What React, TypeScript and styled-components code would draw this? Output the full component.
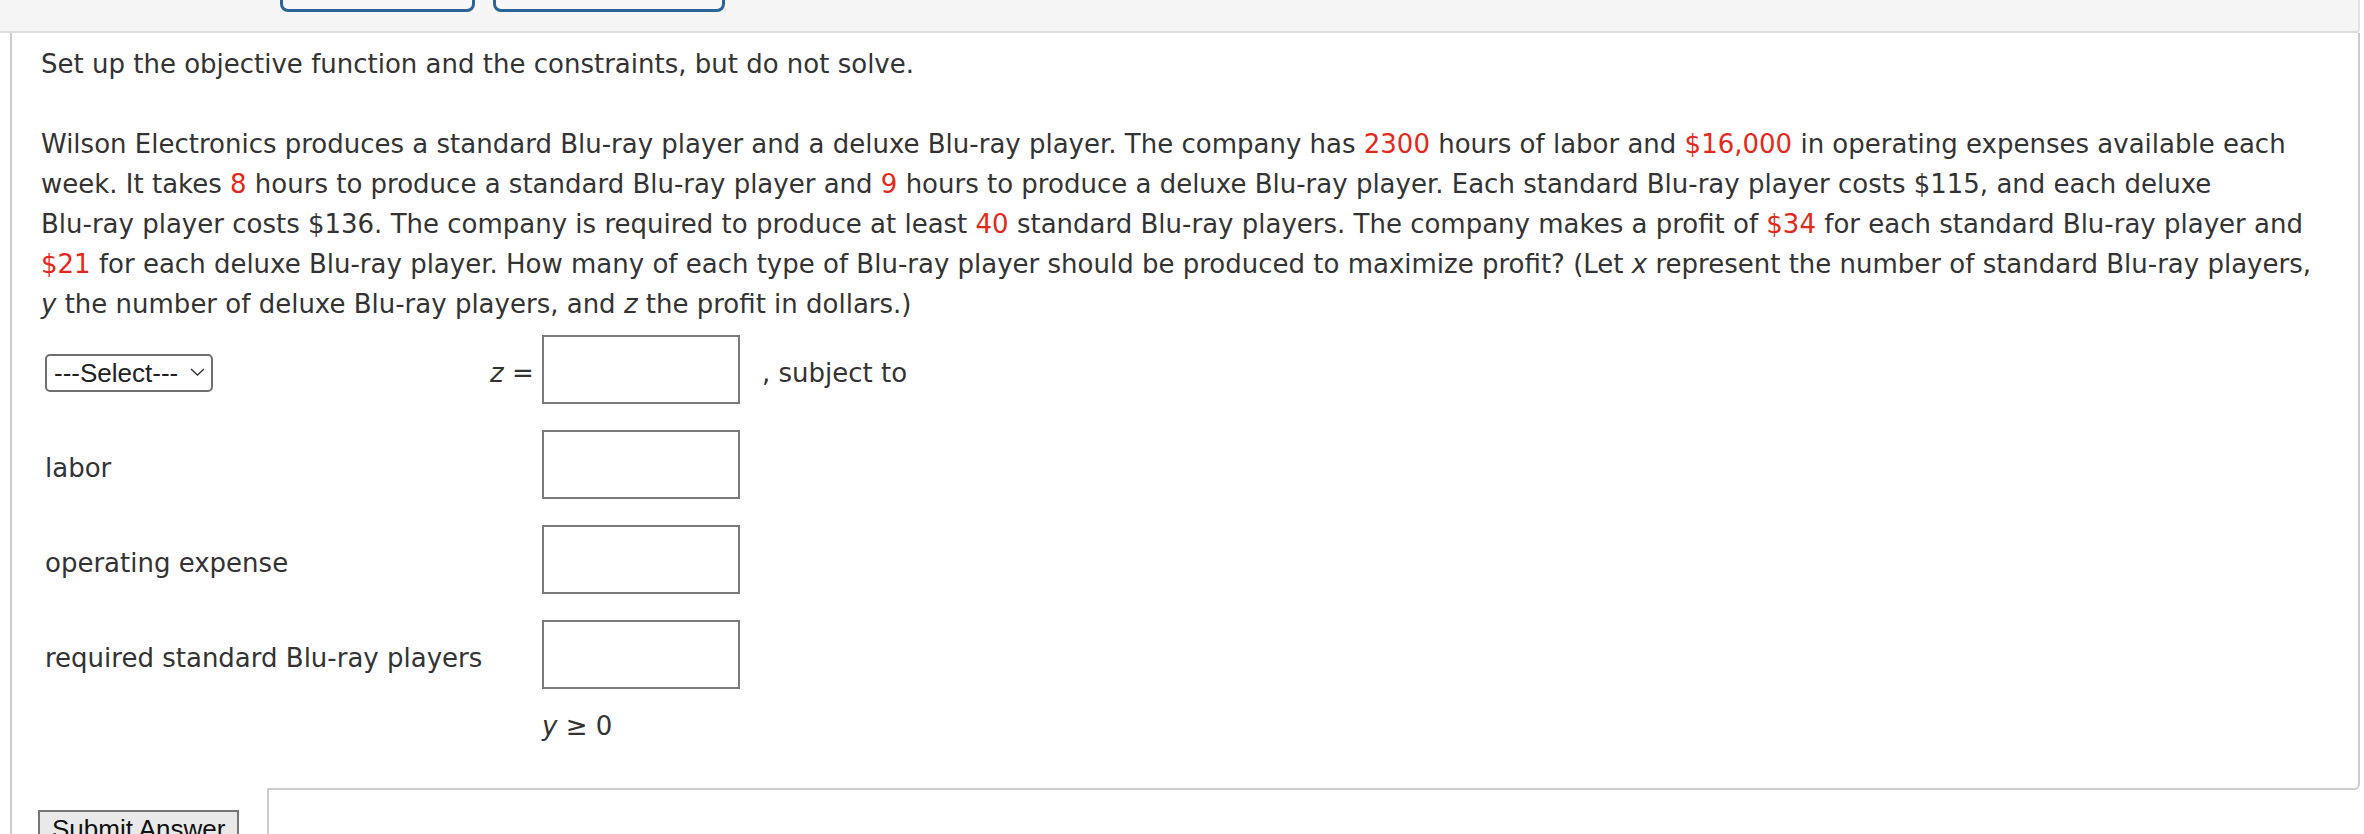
import React from "react";
import styled, { createGlobalStyle } from "styled-components";

const GlobalStyle = createGlobalStyle`
  html, body {
    margin: 0;
    padding: 0;
    background: #ffffff;
    overflow: hidden;
  }
  body {
    font-family: "DejaVu Sans", Verdana, sans-serif;
    color: #333333;
  }
  * { box-sizing: border-box; }
`;

const Page = styled.div`
  width: 2364px;
`;

const TopBar = styled.div`
  display: flex;
  align-items: flex-start;
  gap: 18px;
  height: 33px;
  margin-right: 4px;
  padding-left: 280px;
  background: #f5f5f5;
  border-bottom: 2px solid #dddddd;
  border-right: 2px solid #e2e2e2;
  border-bottom-right-radius: 4px;
`;

const NavButton = styled.button<{ $w: number }>`
  width: ${(p) => p.$w}px;
  height: 50px;
  margin-top: -38px;
  border: 3px solid #2b6496;
  border-radius: 8px;
  background: #f7f7f7;
  padding: 0;
`;

const Panel = styled.section`
  margin: 0 4px 0 10px;
  border: 2px solid #cccccc;
  border-top: none;
  border-bottom-right-radius: 6px;
  padding: 11px 29px 38px 29px;
`;

const Paragraph = styled.p<{ $gap?: number }>`
  margin: 0 0 ${(p) => p.$gap ?? 0}px 0;
  font-size: 26px;
  line-height: 40px;
  color: #333333;
`;

const Given = styled.span`
  color: #e5281c;
`;

const Var = styled.i`
  font-style: italic;
`;

const FormRow = styled.div<{ $h: number }>`
  display: grid;
  grid-template-columns: 449px 52px 198px auto;
  align-items: center;
  height: ${(p) => p.$h}px;
  font-size: 26px;
  line-height: 40px;
  color: #333333;
`;

const FormBlock = styled.div`
  margin-top: -2px;
`;

const RowLabel = styled.span`
  padding: 6px 0 0 4px;
  white-space: nowrap;
`;

const EqLabel = styled.span`
  padding-top: 6px;
  white-space: nowrap;
`;

const Trailing = styled.span`
  padding: 6px 0 0 22px;
  white-space: nowrap;
`;

const AnswerInput = styled.input`
  width: 198px;
  height: 69px;
  border: 2px solid #7b7b7b;
  border-radius: 0;
  background: #ffffff;
  padding: 0 6px;
  font-family: "DejaVu Sans", Verdana, sans-serif;
  font-size: 26px;
  color: #333333;
  outline: none;
`;

const SelectWrap = styled.div`
  position: relative;
  width: 168px;
  height: 38px;
  margin: 5px 0 0 4px;
`;

const SelectBox = styled.select`
  appearance: none;
  -webkit-appearance: none;
  width: 100%;
  height: 100%;
  border: 2px solid #6f6f6f;
  border-radius: 5px;
  background: #ffffff;
  font-family: "Liberation Sans", Arial, sans-serif;
  font-size: 26px;
  color: #222222;
  padding: 0 0 0 7px;
  outline: none;
`;

const Chevron = styled.svg`
  position: absolute;
  right: 8px;
  top: 15px;
  width: 15px;
  height: 8px;
  pointer-events: none;
`;

const BoundCell = styled.span`
  grid-column: 3;
  align-self: start;
  padding-top: 4px;
  white-space: nowrap;
`;

const FooterRow = styled.div`
  display: flex;
  margin: -2px 4px 0 10px;
`;

const SubmitTab = styled.div`
  width: 259px;
  height: 80px;
  background: #ffffff;
  border-left: 2px solid #cccccc;
  border-right: 2px solid #cccccc;
  padding: 22px 0 0 26px;
`;

const SubmitButton = styled.button`
  width: 201px;
  font-family: "Liberation Sans", Arial, sans-serif;
  font-size: 26px;
  color: #111111;
  background: #e9e9e9;
  border: 2px solid #767676;
  border-radius: 0;
  padding: 2px 12px;
  text-align: left;
  white-space: nowrap;
`;

export default function App() {
  return (
    <Page>
      <GlobalStyle />
      <TopBar>
        <NavButton $w={195} aria-label="previous" />
        <NavButton $w={232} aria-label="next" />
      </TopBar>
      <Panel>
        <Paragraph $gap={40}>
          Set up the objective function and the constraints, but do not solve.
        </Paragraph>
        <Paragraph>
          Wilson Electronics produces a standard Blu-ray player and a deluxe Blu-ray player. The company has{" "}
          <Given>2300</Given> hours of labor and <Given>$16,000</Given> in operating expenses available each
          <br />
          week. It takes <Given>8</Given> hours to produce a standard Blu-ray player and <Given>9</Given> hours to
          produce a deluxe Blu-ray player. Each standard Blu-ray player costs $115, and each deluxe
          <br />
          Blu-ray player costs $136. The company is required to produce at least <Given>40</Given> standard Blu-ray
          players. The company makes a profit of <Given>$34</Given> for each standard Blu-ray player and
          <br />
          <Given>$21</Given> for each deluxe Blu-ray player. How many of each type of Blu-ray player should be
          produced to maximize profit? (Let <Var>x</Var> represent the number of standard Blu-ray players,
          <br />
          <Var>y</Var> the number of deluxe Blu-ray players, and <Var>z</Var> the profit in dollars.)
        </Paragraph>
        <FormBlock>
          <FormRow $h={95}>
            <SelectWrap>
              <SelectBox defaultValue="">
                <option value="">---Select---</option>
                <option value="max">maximize</option>
                <option value="min">minimize</option>
              </SelectBox>
              <Chevron viewBox="0 0 15 8">
                <path d="M1 1 L7.5 7 L14 1" fill="none" stroke="#333" strokeWidth="1.4" />
              </Chevron>
            </SelectWrap>
            <EqLabel>
              <Var>z</Var> =
            </EqLabel>
            <AnswerInput type="text" />
            <Trailing>, subject to</Trailing>
          </FormRow>
          <FormRow $h={95}>
            <RowLabel>labor</RowLabel>
            <span />
            <AnswerInput type="text" />
            <span />
          </FormRow>
          <FormRow $h={95}>
            <RowLabel>operating expense</RowLabel>
            <span />
            <AnswerInput type="text" />
            <span />
          </FormRow>
          <FormRow $h={95}>
            <RowLabel>required standard Blu-ray players</RowLabel>
            <span />
            <AnswerInput type="text" />
            <span />
          </FormRow>
          <FormRow $h={48}>
            <BoundCell>
              <Var>y</Var> ≥ 0
            </BoundCell>
          </FormRow>
        </FormBlock>
      </Panel>
      <FooterRow>
        <SubmitTab>
          <SubmitButton type="button">Submit Answer</SubmitButton>
        </SubmitTab>
      </FooterRow>
    </Page>
  );
}
